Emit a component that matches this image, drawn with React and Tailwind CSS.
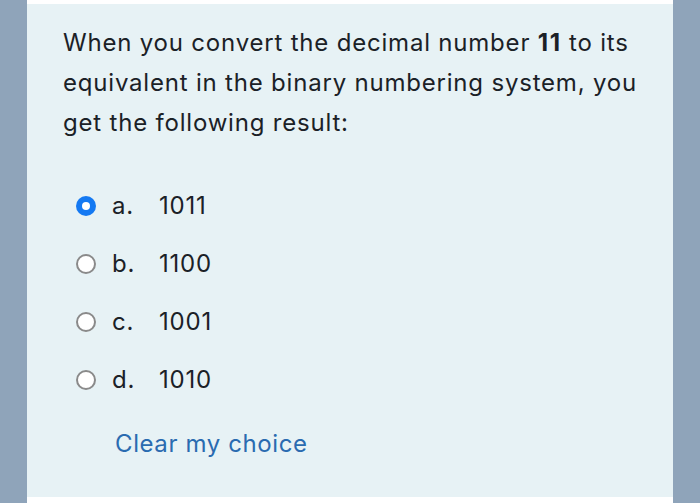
export default function App() {
  const options = [
    { key: 'a.', value: '1011', checked: true },
    { key: 'b.', value: '1100' },
    { key: 'c.', value: '1001' },
    { key: 'd.', value: '1010' },
  ];

  return (
    <div
      className="flex h-[503px] w-[700px] overflow-hidden bg-[#8fa4ba] text-[#1b2127]"
      style={{ fontFamily: 'Inter, "Noto Sans", sans-serif' }}
    >
      <div className="w-[27px] shrink-0 bg-[#8fa4ba]" />
      <div className="flex flex-1 flex-col bg-white pt-[4px] pb-[6px]">
        <div className="flex-1 bg-[#e7f2f5] pl-[36px] pr-[26px] pt-[19px] tracking-[0.8px]">
          <p className="text-[24px] leading-[40px]">
            When you convert the decimal number <b className="font-bold tracking-[1.5px]">11</b> to
            its equivalent in the binary numbering system, you get the following result:
          </p>

          <div className="mt-[43px] ml-[13px] flex flex-col gap-[18px]">
            {options.map((o) => (
              <div key={o.key} className="flex h-[40px] items-center text-[24px]">
                {o.checked ? (
                  <span className="flex h-[20px] w-[20px] items-center justify-center rounded-full bg-[#1479f2]">
                    <span className="h-[8px] w-[8px] rounded-full bg-white" />
                  </span>
                ) : (
                  <span className="h-[20px] w-[20px] rounded-full border-2 border-[#8a8a8a] bg-white" />
                )}
                <span className="ml-[16px] w-[47px]">{o.key}</span>
                <span>{o.value}</span>
              </div>
            ))}
          </div>

          <div className="mt-[24px] ml-[52px] text-[24px] leading-[40px] tracking-[0.6px] text-[#2a6bb0]">
            Clear my choice
          </div>
        </div>
      </div>
      <div className="w-[27px] shrink-0 bg-[#8fa4ba]" />
    </div>
  );
}
